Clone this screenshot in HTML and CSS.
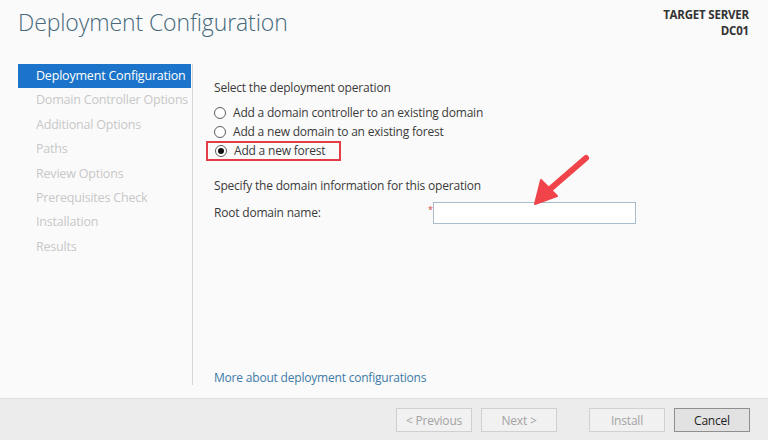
FILE: index.html
```html
<!DOCTYPE html>
<html>
<head>
<meta charset="utf-8">
<link rel="stylesheet" href="styles.css">
</head>
<body>
<div class="page">
  <header class="header">
    <h1 class="title">Deployment Configuration</h1>
    <div class="target">
      <div>TARGET SERVER</div>
      <div>DC01</div>
    </div>
  </header>
  <div class="main">
    <nav class="sidebar">
      <div class="nav-item active">Deployment Configuration</div>
      <div class="nav-item">Domain Controller Options</div>
      <div class="nav-item">Additional Options</div>
      <div class="nav-item">Paths</div>
      <div class="nav-item">Review Options</div>
      <div class="nav-item">Prerequisites Check</div>
      <div class="nav-item">Installation</div>
      <div class="nav-item">Results</div>
    </nav>
    <section class="content">
      <div class="label">Select the deployment operation</div>
      <div class="radios">
        <div class="radio"><span class="circle"></span>Add a domain controller to an existing domain</div>
        <div class="radio"><span class="circle"></span>Add a new domain to an existing forest</div>
        <div class="radio checked"><span class="circle"></span>Add a new forest</div>
      </div>
      <div class="label spec">Specify the domain information for this operation</div>
      <div class="field">
        <span class="field-label">Root domain name:</span>
        <span class="req">*</span>
        <span class="input"></span>
      </div>
      <div class="spacer"></div>
      <a class="more">More about deployment configurations</a>
    </section>
  </div>
  <footer class="footer">
    <button class="btn">&lt; Previous</button>
    <button class="btn">Next &gt;</button>
    <button class="btn install">Install</button>
    <button class="btn cancel">Cancel</button>
  </footer>
  <svg class="arrow" width="70" height="60" viewBox="0 0 70 60">
    <line x1="55" y1="8" x2="18" y2="40" stroke="#f0444a" stroke-width="6" stroke-linecap="round"/>
    <polygon points="4,54 10,30 26,46" fill="#f0444a" stroke="#f0444a" stroke-width="2" stroke-linejoin="round"/>
  </svg>
</div>
</body>
</html>
```
FILE: styles.css
```css
* { box-sizing: border-box; }
html, body { margin: 0; padding: 0; }
body {
  width: 768px;
  height: 440px;
  background: #fafafa;
  font-family: "Open Sans", "Noto Sans", sans-serif;
  color: #3a3a3a;
  overflow: hidden;
}
.page {
  position: relative;
  width: 768px;
  height: 440px;
  display: flex;
  flex-direction: column;
}
.header {
  height: 64px;
  display: flex;
  justify-content: space-between;
  align-items: flex-start;
  padding: 0 19px 0 18px;
}
.title {
  margin: 6px 0 0 0;
  font-weight: 300;
  font-size: 23px;
  letter-spacing: -0.1px;
  color: #46697b;
}
.target {
  margin-top: 7px;
  text-align: right;
  font-weight: 700;
  font-size: 11.5px;
  line-height: 16px;
  color: #333;
  letter-spacing: -0.2px;
}
.main {
  flex: 1;
  display: flex;
  padding-bottom: 13px;
}
.sidebar {
  width: 175px;
  margin-left: 18px;
  border-right: 1px solid #d6d6d6;
  display: flex;
  flex-direction: column;
}
.nav-item {
  height: 24.4px;
  line-height: 24px;
  padding-left: 18px;
  font-size: 12.5px;
  letter-spacing: -0.2px;
  color: #c8c8c8;
  white-space: nowrap;
}
.nav-item.active {
  background: #1b74c9;
  color: #fff;
  margin-right: 1px;
}
.content {
  flex: 1;
  padding: 15px 0 0 21px;
  display: flex;
  flex-direction: column;
  font-size: 12px;
  letter-spacing: -0.2px;
  color: #3a3a3a;
}
.label { line-height: 18px; }
.radios {
  margin-top: 7px;
  display: flex;
  flex-direction: column;
}
.radio {
  height: 18.5px;
  line-height: 18px;
  display: flex;
  align-items: center;
  white-space: nowrap;
}
.circle {
  width: 12px;
  height: 12px;
  border: 1px solid #5c5c5c;
  border-radius: 50%;
  background: #fff;
  margin-right: 7px;
  display: flex;
  align-items: center;
  justify-content: center;
}
.radio.checked {
  align-self: flex-start;
  margin-left: -8px;
  padding: 0 14px 0 7px;
  height: 20px;
  border: 2px solid #e43c44;
}
.radio.checked .circle::after {
  content: "";
  width: 6px;
  height: 6px;
  border-radius: 50%;
  background: #111;
}
.spec { margin-top: 16px; }
.field {
  margin-top: 7px;
  display: flex;
  align-items: center;
}
.field-label { width: 214px; line-height: 18px; }
.req {
  color: #d0453c;
  font-size: 9px;
  width: 5px;
  align-self: flex-start;
  margin-top: 1px;
}
.input {
  width: 203px;
  height: 22px;
  border: 1px solid #a9bccb;
  background: #fff;
}
.spacer { flex: 1; }
.more {
  color: #3d7ba6;
  font-size: 12px;
  line-height: 18px;
  margin-bottom: -2px;
}
.footer {
  height: 42px;
  background: #ececec;
  border-top: 1px solid #dedede;
  display: flex;
  align-items: center;
  padding: 0 18px 0 396px;
  gap: 9px;
}
.btn {
  width: 76px;
  height: 24px;
  border: 1px solid #d0d0d0;
  background: #f1f1f1;
  color: #a3a3a3;
  font-family: "Open Sans", "Noto Sans", sans-serif;
  font-size: 12px;
  letter-spacing: -0.2px;
  padding: 0;
  margin-top: 1px;
}
.btn.install { margin-left: 23px; }
.btn.cancel {
  border-color: #8f8f8f;
  background: #e2e2e2;
  color: #222;
}
.arrow {
  position: absolute;
  left: 531px;
  top: 150px;
}
```
